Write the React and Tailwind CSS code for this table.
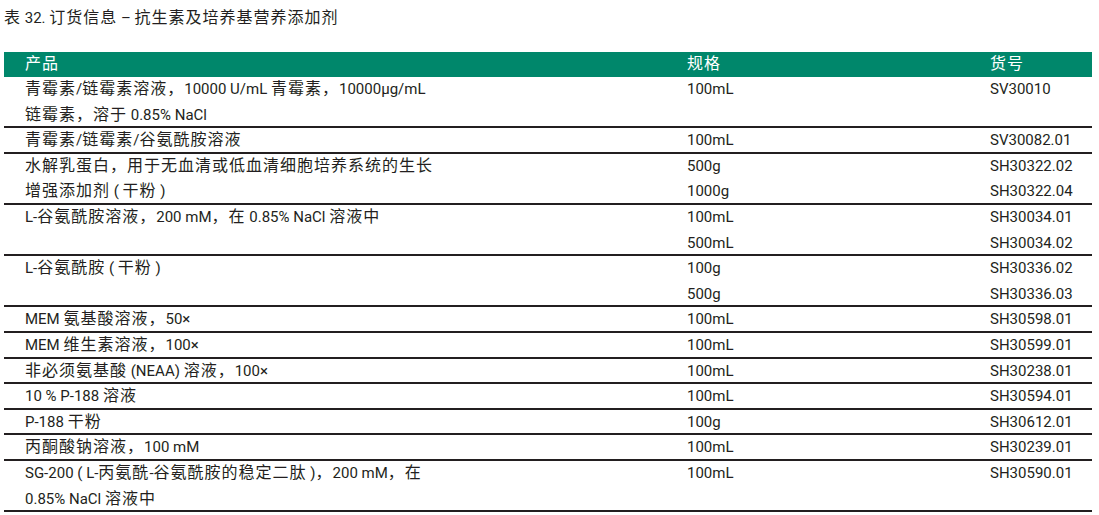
import React from 'react';

const rows = [
	{ name: ['青霉素/链霉素溶液，10000 U/mL 青霉素，10000µg/mL', '链霉素，溶于 0.85% NaCl'], sizes: ['100mL'], skus: ['SV30010'] },
	{ name: ['青霉素/链霉素/谷氨酰胺溶液'], sizes: ['100mL'], skus: ['SV30082.01'] },
	{ name: ['水解乳蛋白，用于无血清或低血清细胞培养系统的生长', '增强添加剂 ( 干粉 )'], sizes: ['500g', '1000g'], skus: ['SH30322.02', 'SH30322.04'] },
	{ name: ['L-谷氨酰胺溶液，200 mM，在 0.85% NaCl 溶液中'], sizes: ['100mL', '500mL'], skus: ['SH30034.01', 'SH30034.02'] },
	{ name: ['L-谷氨酰胺 ( 干粉 )'], sizes: ['100g', '500g'], skus: ['SH30336.02', 'SH30336.03'] },
	{ name: ['MEM 氨基酸溶液，50×'], sizes: ['100mL'], skus: ['SH30598.01'] },
	{ name: ['MEM 维生素溶液，100×'], sizes: ['100mL'], skus: ['SH30599.01'] },
	{ name: ['非必须氨基酸 (NEAA) 溶液，100×'], sizes: ['100mL'], skus: ['SH30238.01'] },
	{ name: ['10 % P-188 溶液'], sizes: ['100mL'], skus: ['SH30594.01'] },
	{ name: ['P-188 干粉'], sizes: ['100g'], skus: ['SH30612.01'] },
	{ name: ['丙酮酸钠溶液，100 mM'], sizes: ['100mL'], skus: ['SH30239.01'] },
	{ name: ['SG-200 ( L-丙氨酰-谷氨酰胺的稳定二肽 )，200 mM，在', '0.85% NaCl 溶液中'], sizes: ['100mL'], skus: ['SH30590.01'] },
];

// CJK runs are set a touch larger with a little tracking, like the printed table
function Txt({ children }) {
	const parts = children.split(/([\u3000-\u303f\u4e00-\u9fff\uff00-\uffef]+)/);
	return (
		<>
			{parts.map((p, i) =>
				i % 2 === 1 ? (
					<span key={i} className="text-[16px] leading-none tracking-[1px]">
						{p}
					</span>
				) : (
					p
				)
			)}
		</>
	);
}

function Cell({ lines, first }) {
	return (
		<div className={first ? 'pl-[21px]' : ''}>
			{lines.map((l, i) => (
				<div key={i} className="h-[25.6px] leading-[25.6px] whitespace-nowrap">
					<Txt>{l}</Txt>
				</div>
			))}
		</div>
	);
}

export default function App() {
	return (
		<div className="w-[1099px] h-[515px] bg-white text-[#231f20] text-[15px] overflow-hidden" style={{ fontFamily: "Roboto, 'Noto Sans CJK SC', sans-serif" }}>
			<div className="pl-[4px] pt-[7px] h-[29px] leading-[22px]">
				<Txt>表 32. 订货信息 – 抗生素及培养基营养添加剂</Txt>
			</div>
			<div className="ml-[4px] mt-[23px] w-[1088px]">
				<div className="grid grid-cols-[683px_303px_1fr] bg-[#00876b] text-white h-[25px] items-center">
					<div className="pl-[21px]">
						<Txt>产品</Txt>
					</div>
					<div>
						<Txt>规格</Txt>
					</div>
					<div>
						<Txt>货号</Txt>
					</div>
				</div>
				{rows.map((r, i) => (
					<div key={i} className={`grid grid-cols-[683px_303px_1fr] ${i === 0 ? '' : 'border-t-2 border-[#231f20] -mt-[2px]'}`}>
						<Cell lines={r.name} first />
						<Cell lines={r.sizes} />
						<Cell lines={r.skus} />
					</div>
				))}
				<div className="border-t-2 border-[#231f20] -mt-[2px]" />
			</div>
		</div>
	);
}
